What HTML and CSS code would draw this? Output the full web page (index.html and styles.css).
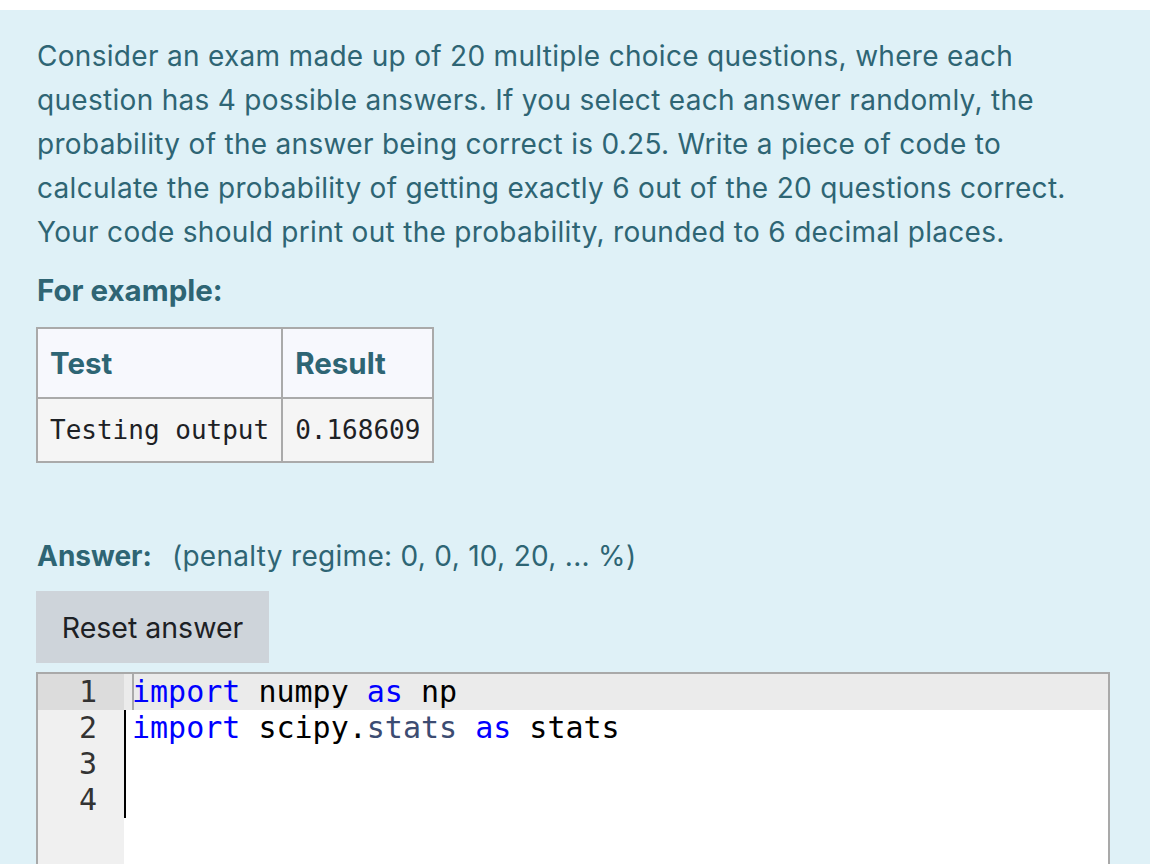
FILE: index.html
```html
<!DOCTYPE html>
<html>
<head>
<meta charset="utf-8">
<link rel="stylesheet" href="styles.css">
</head>
<body>
<div class="que">
  <p class="qtext">Consider an exam made up of 20 multiple choice questions, where each question has 4 possible answers. If you select each answer randomly, the probability of the answer being correct is 0.25. Write a piece of code to calculate the probability of getting exactly 6 out of the 20 questions correct. Your code should print out the probability, rounded to 6 decimal places.</p>
  <h5 class="for-example">For example:</h5>
  <table class="examples">
    <thead>
      <tr><th class="c-test">Test</th><th class="c-result">Result</th></tr>
    </thead>
    <tbody>
      <tr><td class="mono">Testing output</td><td class="mono">0.168609</td></tr>
    </tbody>
  </table>
  <div class="answer-line"><span class="answer-label">Answer:</span><span class="penalty">(penalty regime: 0, 0, 10, 20, ... %)</span></div>
  <button class="reset">Reset answer</button>
  <div class="editor">
    <div class="gutter">
      <div class="gl active">1</div>
      <div class="gl">2</div>
      <div class="gl">3</div>
      <div class="gl">4</div>
    </div>
    <div class="code">
      <div class="cl active"><span class="cursor"></span><span class="kw">import</span> numpy <span class="kw">as</span> np</div>
      <div class="cl"><span class="kw">import</span> scipy.<span class="sf">stats</span> <span class="kw">as</span> stats</div>
      <div class="cl"></div>
      <div class="cl"></div>
    </div>
  </div>
</div>
</body>
</html>
```
FILE: styles.css
```css
html, body {
  margin: 0;
  padding: 0;
  background: #ffffff;
}
body {
  font-family: Inter, "Liberation Sans", sans-serif;
  overflow: hidden;
  height: 864px;
}
.que {
  margin-top: 10px;
  width: 1150px;
  height: 854px;
  overflow: hidden;
  box-sizing: border-box;
  background: #dff1f7;
  color: #2e6574;
  padding: 24px 0 0 37px;
}
.qtext {
  margin: 0;
  width: 1060px;
  font-size: 28px;
  line-height: 44px;
  letter-spacing: 0.3px;
}
.for-example {
  margin: 16px 0 0 0;
  font-size: 29.5px;
  line-height: 40px;
  font-weight: 700;
}
.examples {
  margin: 17px 0 0 -1px;
  border-collapse: collapse;
  border: 2px solid #aaaaaa;
}
.examples th, .examples td {
  border: 2px solid #aaaaaa;
  text-align: left;
  padding: 0 12px;
}
.examples th {
  background: #f7f8fd;
  height: 68px;
  font-size: 29.5px;
  font-weight: 700;
  color: #2e6574;
}
.examples td {
  background: #f5f5f5;
  height: 62px;
  color: #1d2125;
}
.mono {
  font-family: "DejaVu Sans Mono", monospace;
  font-size: 26px;
}
.answer-line {
  margin-top: 73px;
  font-size: 28px;
  line-height: 40px;
}
.answer-label {
  font-weight: 700;
  margin-right: 20px;
}
.penalty {
  letter-spacing: 0.3px;
}
.reset {
  display: block;
  margin: 15px 0 0 -1px;
  width: 233px;
  height: 72px;
  border: none;
  background: #ced4da;
  color: #1d2125;
  font-family: Inter, "Liberation Sans", sans-serif;
  font-size: 28.5px;
  padding: 0;
}
.editor {
  margin: 9px 0 0 -1px;
  width: 1074px;
  height: 300px;
  box-sizing: border-box;
  border: 2px solid #a9a9a9;
  background: #ffffff;
  display: flex;
}
.gutter {
  width: 86px;
  flex: none;
  background: #f0f0f0;
  font-family: "DejaVu Sans Mono", monospace;
  font-size: 30px;
  color: #333333;
}
.gl {
  height: 36px;
  line-height: 36px;
  text-align: right;
  padding-right: 27px;
  border-right: 2px solid #000000;
  margin-right: -2px;
}
.gl.active {
  background: #dcdcdc;
}
.code {
  flex: 1;
  padding-left: 2px;
  font-family: "DejaVu Sans Mono", monospace;
  font-size: 30px;
  color: #000000;
}
.cl {
  height: 36px;
  line-height: 36px;
  padding-left: 6px;
  white-space: pre;
  position: relative;
}
.cl.active {
  background: #ebebeb;
  margin-left: -2px;
  padding-left: 8px;
}
.cursor {
  position: absolute;
  left: 8px;
  top: 0;
  width: 2px;
  height: 36px;
  background: #aaaaaa;
}
.kw { color: #0000ff; }
.sf { color: #3c4c72; }
```
